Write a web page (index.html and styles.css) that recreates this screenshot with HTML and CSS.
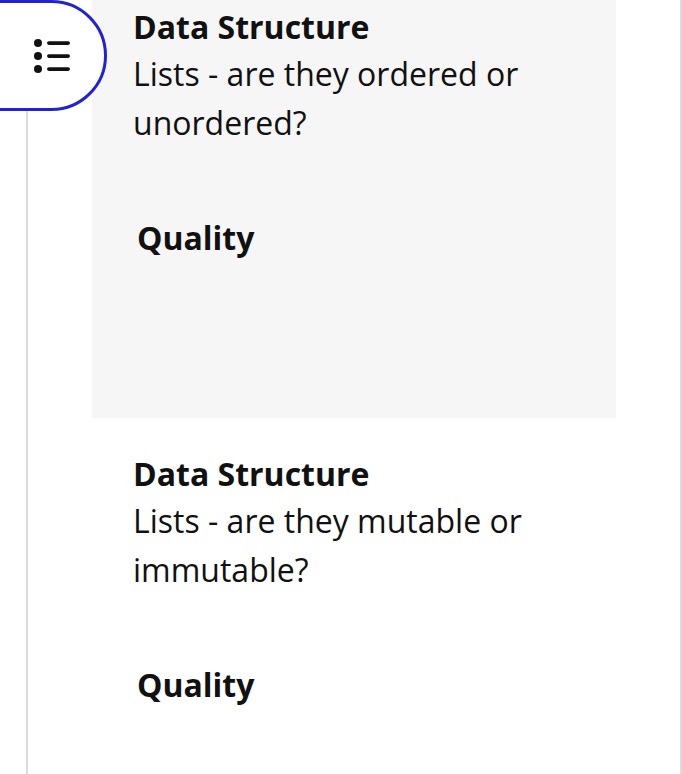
FILE: index.html
```html
<!DOCTYPE html>
<html>
<head>
<meta charset="utf-8">
<link rel="stylesheet" href="styles.css">
</head>
<body>
<div class="page">
  <button class="toc-toggle" aria-label="Table of contents">
    <svg width="40" height="36" viewBox="0 0 40 36" class="toc-icon">
      <circle cx="5" cy="5" r="4" fill="#111"/>
      <circle cx="5" cy="18" r="4" fill="#111"/>
      <circle cx="5" cy="31" r="4" fill="#111"/>
      <rect x="14" y="3.3" width="23" height="3.6" rx="1.8" fill="#111"/>
      <rect x="14" y="16.3" width="23" height="3.6" rx="1.8" fill="#111"/>
      <rect x="14" y="29.3" width="23" height="3.6" rx="1.8" fill="#111"/>
    </svg>
  </button>
  <div class="rail">
    <div class="card card-grey">
      <div class="label">Data Structure</div>
      <div class="value">Lists - are they ordered or unordered?</div>
      <div class="quality">Quality</div>
    </div>
    <div class="card">
      <div class="label">Data Structure</div>
      <div class="value">Lists - are they mutable or immutable?</div>
      <div class="quality">Quality</div>
    </div>
  </div>
</div>
</body>
</html>
```
FILE: styles.css
```css
html, body {
  margin: 0;
  padding: 0;
  background: #fff;
}
body {
  font-family: "Open Sans", "Noto Sans", sans-serif;
  color: #111;
  overflow: hidden;
}
.page {
  position: relative;
  width: 680px;
  height: 774px;
  border-right: 2px solid #dcdcdc;
}
.rail {
  margin-left: 26px;
  border-left: 2px solid #dcdcdc;
  height: 774px;
  padding-left: 64px;
}
.card {
  width: 524px;
  box-sizing: border-box;
  padding: 5px 20px 0 41px;
}
.card-grey {
  background: #f6f6f6;
  height: 418px;
}
.card + .card {
  padding-top: 34px;
}
.label {
  font-weight: 700;
  font-size: 32px;
  line-height: 44px;
}
.value {
  font-size: 32px;
  line-height: 49px;
  width: 440px;
}
.quality {
  font-weight: 700;
  font-size: 32px;
  line-height: 44px;
  margin-top: 69px;
  padding-left: 4px;
}
.toc-toggle {
  position: absolute;
  left: -60px;
  top: 0;
  width: 167px;
  height: 111px;
  box-sizing: border-box;
  border: 3px solid #2222d4;
  border-radius: 0 56px 56px 0;
  background: #fff;
  padding: 0;
  z-index: 2;
}
.toc-icon {
  position: absolute;
  left: 90px;
  top: 35px;
}
```
